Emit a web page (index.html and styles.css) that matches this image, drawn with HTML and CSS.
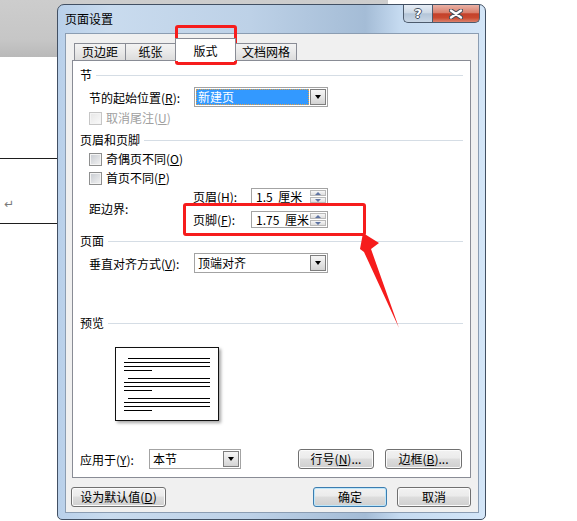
FILE: index.html
```html
<!DOCTYPE html>
<html lang="zh-CN">
<head>
  <meta charset="UTF-8" />
  <meta name="viewport" content="width=device-width, initial-scale=1.0" />
  <title>页面设置</title>
  <link rel="stylesheet" href="styles.css">
</head>
<body>

  <div class="desk-top"></div>
  <div class="doc">
    <div class="doc-rule first"></div>
    <div class="doc-gap"><span class="para">↵</span></div>
    <div class="doc-rule"></div>
  </div>

  <div class="window">
    <div class="titlebar">
      <span class="title">页面设置</span>
      <div class="caption-btns">
        <div class="cap-help"><span>?</span></div>
        <div class="cap-close">
          <svg width="14" height="10" viewBox="0 0 14 10">
            <path d="M2 1.5 L12 8.5 M12 1.5 L2 8.5" stroke="#47505c" stroke-width="4.4" stroke-linecap="round" fill="none"/>
            <path d="M2 1.5 L12 8.5 M12 1.5 L2 8.5" stroke="#fff" stroke-width="2.2" stroke-linecap="round" fill="none"/>
          </svg>
        </div>
      </div>
    </div>

    <div class="client">
      <div class="tabs">
        <div class="tab t1">页边距</div>
        <div class="tab t2">纸张</div>
        <div class="tab active">版式</div>
        <div class="tab t4">文档网格</div>
      </div>

      <div class="panel">
        <div class="heading first">节</div>
        <div class="row indent">
          <span class="lbl">节的起始位置(<u>R</u>):</span>
          <div class="combo wide">
            <span class="combo-text sel">新建页</span>
            <span class="combo-btn"><i class="tri"></i></span>
          </div>
        </div>
        <div class="check indent off mt4">
          <span class="box"></span><span>取消尾注(<u>U</u>)</span>
        </div>

        <div class="heading mt8">页眉和页脚</div>
        <div class="check indent mt5">
          <span class="box"></span><span>奇偶页不同(<u>O</u>)</span>
        </div>
        <div class="check indent mt5">
          <span class="box"></span><span>首页不同(<u>P</u>)</span>
        </div>
        <div class="margins indent">
          <span class="lbl">距边界:</span>
          <div class="spins">
            <div class="spin-row">
              <span class="lbl2">页眉(<u>H</u>):</span>
              <div class="spin">
                <span class="spin-val">1.5 厘米</span>
                <span class="spin-btns"><span class="sb"><i class="up"></i></span><span class="sb"><i class="down"></i></span></span>
              </div>
            </div>
            <div class="spin-row">
              <span class="lbl2">页脚(<u>F</u>):</span>
              <div class="spin">
                <span class="spin-val">1.75 厘米</span>
                <span class="spin-btns"><span class="sb"><i class="up"></i></span><span class="sb"><i class="down"></i></span></span>
              </div>
            </div>
          </div>
        </div>

        <div class="heading mt6">页面</div>
        <div class="row indent">
          <span class="lbl">垂直对齐方式(<u>V</u>):</span>
          <div class="combo wide">
            <span class="combo-text">顶端对齐</span>
            <span class="combo-btn"><i class="tri"></i></span>
          </div>
        </div>

        <div class="heading mt43">预览</div>
        <div class="preview">
          <div class="pg"><div class="pl lead"></div><div class="pl"></div><div class="pl"></div><div class="pl short"></div></div>
          <div class="pg"><div class="pl lead"></div><div class="pl"></div><div class="pl"></div><div class="pl short"></div></div>
          <div class="pg"><div class="pl lead"></div><div class="pl"></div><div class="pl"></div><div class="pl short"></div></div>
        </div>

        <div class="apply">
          <span class="lbl">应用于(<u>Y</u>):</span>
          <div class="combo narrow">
            <span class="combo-text">本节</span>
            <span class="combo-btn"><i class="tri"></i></span>
          </div>
          <button class="btn line-no">行号(<u>N</u>)...</button>
          <button class="btn border-btn">边框(<u>B</u>)...</button>
        </div>
      </div>

      <div class="actions">
        <button class="btn set-default">设为默认值(<u>D</u>)</button>
        <button class="btn ok default">确定</button>
        <button class="btn cancel">取消</button>
      </div>
    </div>
  </div>

  <div class="mark mark-tab"></div>
  <div class="mark mark-foot"></div>
  <svg class="arrow" width="577" height="521" viewBox="0 0 577 521">
    <polygon points="363,233 379,243 371,249 399,328 364,252 360,249" fill="#f61c1c"/>
  </svg>

</body>
</html>
```

FILE: styles.css
```css
* { margin: 0; padding: 0; box-sizing: border-box; }
body {
  width: 577px;
  height: 521px;
  overflow: hidden;
  position: relative;
  background: #fff;
  font-family: "Noto Sans CJK SC", "Liberation Sans", sans-serif;
  font-size: 12px;
  color: #000;
}
u { text-decoration: underline; text-underline-offset: 1px; }

/* desktop behind the dialog */
.desk-top {
  width: 388px;
  height: 57px;
  background: linear-gradient(#cdcdcd, #c6c6c6 70%, #b9b9b9);
}
.doc { width: 57px; }
.doc-rule { height: 1px; background: #1e1e1e; }
.doc-rule.first { margin-top: 101px; }
.doc-gap { height: 64px; padding: 35px 0 0 4px; }
.para { font-family: "DejaVu Sans", sans-serif; font-size: 12px; line-height: 10px; color: #7a7a7a; }

/* dialog window */
.window {
  position: absolute;
  left: 57px;
  top: 4px;
  width: 429px;
  height: 516px;
  border: 1px solid #425063;
  border-radius: 7px 7px 5px 5px;
  background: linear-gradient(90deg, #b9d0ea 0%, #c9dbee 12%, #bdd1e7 45%, #a4bcd6 72%, #c5daf0 80%, #d4e6f8 100%);
  display: flex;
  flex-direction: column;
}
.titlebar {
  height: 28px;
  display: flex;
  align-items: flex-start;
  padding-left: 7px;
}
.title { padding-top: 7px; line-height: 14px; }
.caption-btns { margin-left: auto; margin-right: 5px; display: flex; }
.cap-help, .cap-close {
  height: 18px;
  border: 1px solid #4d5b6d;
  border-top: 0;
  display: flex;
  align-items: center;
  justify-content: center;
}
.cap-help {
  width: 29px;
  border-right: 0;
  border-radius: 0 0 0 5px;
  background: linear-gradient(#e6edf5, #cdd9e6 45%, #b4c5d8 52%, #c9d7e6);
}
.cap-help span {
  font-family: "DejaVu Sans", sans-serif;
  font-weight: bold;
  font-size: 13px;
  line-height: 13px;
  color: #fff;
  text-shadow: 1px 0 #45515f, -1px 0 #45515f, 0 1px #45515f, 0 -1px #45515f;
}
.cap-close {
  width: 48px;
  border-radius: 0 0 5px 0;
  background: linear-gradient(#eab2a6, #d97f6c 45%, #c4412b 52%, #c9492f 75%, #dc826d);
}

.client {
  flex: 1;
  margin: 0 6px 6px 7px;
  border: 1px solid #8b9db2;
  background: #f0f0f0;
  padding: 4px 7px 5px 6px;
  display: flex;
  flex-direction: column;
}

/* tabs */
.tabs {
  height: 22px;
  display: flex;
  align-items: flex-end;
  padding-left: 2px;
  position: relative;
  z-index: 1;
}
.tab {
  height: 17px;
  border: 1px solid #898c95;
  border-bottom: 0;
  background: linear-gradient(#f3f3f3, #e9e9e9 50%, #dcdcdc);
  text-align: center;
  line-height: 16px;
}
.tab.t1 { width: 52px; }
.tab.t2 { width: 51px; margin-left: -1px; }
.tab.t4 { width: 62px; margin-left: -1px; }
.tab.active {
  width: 61px;
  height: 23px;
  margin-left: -1px;
  margin-bottom: -1px;
  background: #fff;
  padding-top: 4px;
  position: relative;
  z-index: 2;
}

.panel {
  height: 418px;
  background: #fff;
  border: 1px solid #898c95;
  padding: 0 7px;
  display: flex;
  flex-direction: column;
}
.heading {
  height: 14px;
  line-height: 14px;
  display: flex;
  align-items: center;
}
.heading::after {
  content: "";
  flex: 1;
  height: 1px;
  background: #d5dde5;
  margin-left: 4px;
}
.heading.first { margin-top: 7px; }
.mt4 { margin-top: 4px; }
.mt5 { margin-top: 5px; }
.mt6 { margin-top: 6px; }
.mt8 { margin-top: 8px; }
.mt43 { margin-top: 43px; }
.indent { margin-left: 9px; }

.row {
  height: 20px;
  margin-top: 5px;
  display: flex;
  align-items: center;
}
.row .lbl { width: 105px; }

.combo {
  height: 20px;
  border: 1px solid #a3a3a3;
  background: #fff;
  padding: 1px;
  display: flex;
}
.combo.wide { width: 134px; }
.combo.narrow { width: 92px; }
.combo-text { flex: 1; line-height: 16px; padding-left: 2px; }
.combo-text.sel {
  background: #3399ff;
  color: #fff;
  margin-right: 1px;
  outline: 1px dotted #e8a040;
  outline-offset: -1px;
}
.combo-btn {
  width: 16px;
  border: 1px solid #7e7e7e;
  background: linear-gradient(#f6f6f6, #e6e6e6 50%, #d3d3d3);
  display: flex;
  align-items: center;
  justify-content: center;
}
.tri {
  border-left: 3.5px solid transparent;
  border-right: 3.5px solid transparent;
  border-top: 4px solid #000;
}

.check {
  height: 14px;
  display: flex;
  align-items: center;
  gap: 4px;
  line-height: 14px;
}
.box {
  width: 13px;
  height: 13px;
  border: 1px solid #8e8f8f;
  background: linear-gradient(135deg, #c6cad0, #f3f3f3);
  box-shadow: inset 0 0 0 1px #f4f4f4;
}
.check.off { color: #a0a0a0; }
.check.off .box {
  border-color: #c6c6c6;
  background: linear-gradient(135deg, #e6e6e6, #fafafa);
}

.margins {
  height: 40px;
  margin-top: 3px;
  display: flex;
  align-items: center;
}
.margins .lbl { width: 104px; }
.spins { display: flex; flex-direction: column; gap: 6px; }
.spin-row { height: 17px; display: flex; align-items: center; }
.lbl2 { width: 58px; }
.spin {
  width: 77px;
  height: 17px;
  border: 1px solid #a3a3a3;
  padding: 1px;
  display: flex;
  align-items: center;
}
.spin-val { flex: 1; padding-left: 3px; line-height: 13px; word-spacing: 3px; }
.spin-btns { width: 16px; height: 13px; display: flex; flex-direction: column; gap: 1px; }
.sb {
  flex: 1;
  border: 1px solid #b9b9b9;
  background: linear-gradient(#f7f7f7, #dedede);
  display: flex;
  align-items: center;
  justify-content: center;
}
.up, .down {
  border-left: 3px solid transparent;
  border-right: 3px solid transparent;
}
.up { border-bottom: 3px solid #5f74a3; }
.down { border-top: 3px solid #5f74a3; }

/* preview page */
.preview {
  width: 104px;
  height: 74px;
  margin: 17px 0 0 35px;
  border: 1px solid #111;
  background: #fff;
  box-shadow: 2px 2px 3px rgba(0, 0, 0, 0.35);
  padding: 10px 8px 0;
}
.pg + .pg { margin-top: 7px; }
.pl { height: 1px; background: #000; }
.pl + .pl { margin-top: 3px; }
.pl.lead { margin-left: 4px; }
.pl.short { width: 28px; }

.apply {
  height: 20px;
  margin-top: 28px;
  display: flex;
  align-items: center;
}
.apply .lbl { width: 69px; }

/* buttons */
.btn {
  height: 20px;
  border: 1px solid #707070;
  border-radius: 3px;
  background: linear-gradient(#f2f2f2, #ebebeb 45%, #dddddd 50%, #cfcfcf);
  box-shadow: inset 0 0 0 1px #fbfbfb;
  font: inherit;
  line-height: 18px;
  text-align: center;
  color: #000;
  padding: 0;
}
.btn.line-no { width: 76px; margin-left: auto; }
.btn.border-btn { width: 77px; margin: 0 1px 0 11px; }
.btn.default {
  border-color: #3c7db0;
  box-shadow: inset 0 0 0 1px #bde6fa;
}

.actions {
  height: 20px;
  margin: 9px 0 0 -1px;
  display: flex;
  gap: 10px;
}
.btn.set-default { width: 95px; margin-right: auto; }
.btn.ok, .btn.cancel { width: 74px; }

/* red annotations over the screenshot */
.mark {
  position: absolute;
  border: 3px solid #f61c1c;
  border-radius: 3px;
}
.mark-tab { left: 175px; top: 25px; width: 62px; height: 40px; }
.mark-foot { left: 183px; top: 203px; width: 183px; height: 33px; }
.arrow { position: absolute; left: 0; top: 0; pointer-events: none; }
```
